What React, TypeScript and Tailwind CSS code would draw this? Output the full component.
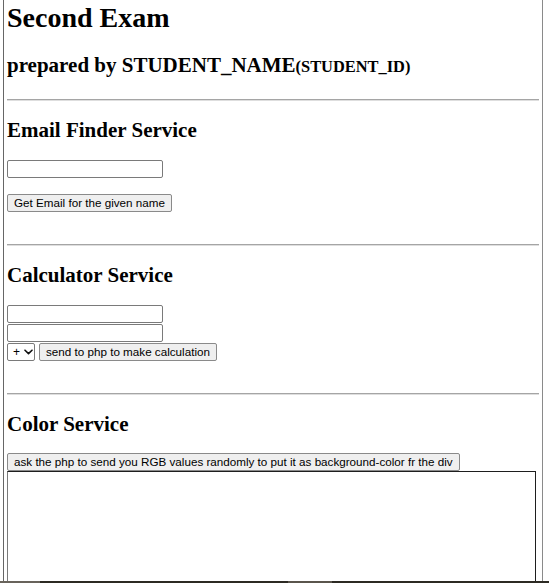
import React from "react";

const serif = { fontFamily: '"Liberation Serif", "Times New Roman", serif' };

function Btn({ children }: { children: React.ReactNode }) {
  return (
    <button
      type="button"
      className="h-[18px] px-[6px] flex items-center justify-center bg-[#efefef] border border-[#8a8a8a] rounded-[2px] text-[11.67px] leading-none text-black whitespace-nowrap font-['Liberation_Sans',Arial,sans-serif]"
    >
      {children}
    </button>
  );
}

function Field() {
  return (
    <div className="h-[18px] w-[156px] border border-[#7a7a7a] rounded-[2px] bg-white" />
  );
}

function Rule() {
  return <div className="h-[2px] border-t border-t-[#a5a5a5] border-b border-b-[#dedede]" />;
}

export default function App() {
  return (
    <div className="bg-white min-h-screen overflow-hidden">
      <div
        className="ml-[3px] w-[540px] min-h-screen border-l border-l-[#666] border-r border-r-[#8a8a8a] px-[3px] flex flex-col items-stretch text-black"
        style={serif}
      >
        <h1 className="mt-[2px] text-[28px] leading-[31px] font-bold">Second Exam</h1>
        <h2 className="mt-[20px] text-[21px] leading-[24px] font-bold whitespace-nowrap">
          prepared by STUDENT_NAME<span className="text-[16.4px]">(STUDENT_ID)</span>
        </h2>
        <div className="mt-[20px]">
          <Rule />
        </div>

        <h2 className="mt-[17px] text-[21px] leading-[24px] font-bold">Email Finder Service</h2>
        <div className="mt-[18px] flex">
          <Field />
        </div>
        <div className="mt-[16px] flex">
          <Btn>Get Email for the given name</Btn>
        </div>
        <div className="mt-[32px]">
          <Rule />
        </div>

        <h2 className="mt-[17px] text-[21px] leading-[24px] font-bold">Calculator Service</h2>
        <div className="mt-[18px] flex">
          <Field />
        </div>
        <div className="mt-[1px] flex">
          <Field />
        </div>
        <div className="mt-[1px] flex items-center gap-[4px]">
          <div className="h-[18px] w-[28px] border border-[#7a7a7a] rounded-[2px] bg-white flex items-center pl-[5px] gap-[4px] text-[12px] leading-none font-['Liberation_Sans',Arial,sans-serif]">
            <span>+</span>
            <svg width="9" height="6" viewBox="0 0 9 6" fill="none">
              <path d="M1 1.2 L4.5 4.6 L8 1.2" stroke="#111" strokeWidth="1.6" strokeLinecap="round" strokeLinejoin="round" />
            </svg>
          </div>
          <Btn>send to php to make calculation</Btn>
        </div>
        <div className="mt-[32px]">
          <Rule />
        </div>

        <h2 className="mt-[17px] text-[21px] leading-[24px] font-bold">Color Service</h2>
        <div className="mt-[17px] flex">
          <Btn>ask the php to send you RGB values randomly to put it as background-color fr the div</Btn>
        </div>
        <div className="w-[529px] h-[300px] border border-[#1e1e1e] border-l-[#7a7a7a] bg-white" />
      </div>

      <div className="fixed bottom-0 left-0 right-0 h-[2px] flex">
        <div className="w-[40px] bg-[#68635b]" />
        <div className="w-[248px] bg-[#2c2a23]" />
        <div className="w-[44px] bg-[#5a554c]" />
        <div className="flex-1 bg-[#2c2a23]" />
      </div>
    </div>
  );
}
